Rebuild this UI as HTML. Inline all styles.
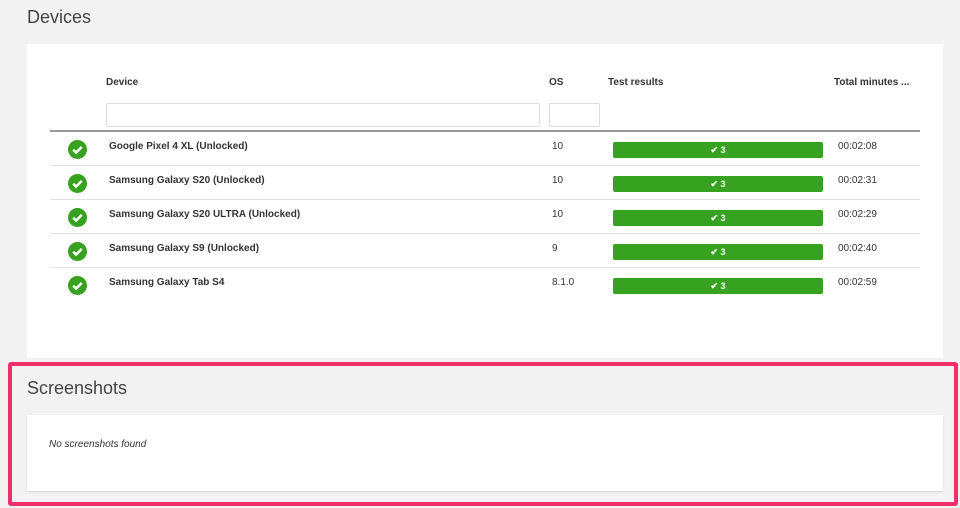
<!DOCTYPE html>
<html><head><style>
*{margin:0;padding:0;box-sizing:border-box}
body{width:960px;height:508px;background:#f2f2f2;font-family:"Liberation Sans",Arial,sans-serif;position:relative;overflow:hidden;color:#333}
.a{position:absolute}
h2{position:absolute;font-weight:normal;font-size:18px;color:#444}
.th{position:absolute;top:77px;font-size:10px;font-weight:bold;color:#333}
.inp{position:absolute;top:103px;height:24px;border:1px solid #ddd;background:#fff;border-radius:2px}
.row{position:absolute;left:50px;width:870px;height:34px;border-bottom:1px solid #e2e2e2}
.nm{position:absolute;left:59px;top:9px;font-size:10px;font-weight:bold;color:#333}
.os{position:absolute;left:502px;top:9px;font-size:10px;color:#333}
.bar{position:absolute;left:563px;top:10px;width:210px;height:16px;background:#37a21f;border-radius:2px;color:#fff;font-size:9px;font-weight:bold;text-align:center;line-height:16px}
.tm{position:absolute;left:788px;top:9px;font-size:10px;color:#333}
.ck{position:absolute;left:18px;top:8px}
</style></head><body>
<h2 style="left:27px;top:7px">Devices</h2>
<div class="a" style="left:27px;top:44px;width:916px;height:314px;background:#fff"></div>
<div class="th" style="left:106px">Device</div>
<div class="th" style="left:549px">OS</div>
<div class="th" style="left:608px">Test results</div>
<div class="th" style="left:834px">Total minutes ...</div>
<div class="inp" style="left:106px;width:434px"></div>
<div class="inp" style="left:549px;width:51px"></div>
<div class="a" style="left:50px;top:130px;width:870px;height:2px;background:#999"></div>

<div class="row" style="top:132px"><svg class="ck" width="19" height="19" viewBox="0 0 20 20"><circle cx="10" cy="10" r="10" fill="#37a21f"/><path d="M5.5 10.3l3 3 6-6" stroke="#fff" stroke-width="2.6" fill="none"/></svg><div class="nm">Google Pixel 4 XL (Unlocked)</div><div class="os">10</div><div class="bar">✔ 3</div><div class="tm">00:02:08</div></div>
<div class="row" style="top:166px"><svg class="ck" width="19" height="19" viewBox="0 0 20 20"><circle cx="10" cy="10" r="10" fill="#37a21f"/><path d="M5.5 10.3l3 3 6-6" stroke="#fff" stroke-width="2.6" fill="none"/></svg><div class="nm">Samsung Galaxy S20 (Unlocked)</div><div class="os">10</div><div class="bar">✔ 3</div><div class="tm">00:02:31</div></div>
<div class="row" style="top:200px"><svg class="ck" width="19" height="19" viewBox="0 0 20 20"><circle cx="10" cy="10" r="10" fill="#37a21f"/><path d="M5.5 10.3l3 3 6-6" stroke="#fff" stroke-width="2.6" fill="none"/></svg><div class="nm">Samsung Galaxy S20 ULTRA (Unlocked)</div><div class="os">10</div><div class="bar">✔ 3</div><div class="tm">00:02:29</div></div>
<div class="row" style="top:234px"><svg class="ck" width="19" height="19" viewBox="0 0 20 20"><circle cx="10" cy="10" r="10" fill="#37a21f"/><path d="M5.5 10.3l3 3 6-6" stroke="#fff" stroke-width="2.6" fill="none"/></svg><div class="nm">Samsung Galaxy S9 (Unlocked)</div><div class="os">9</div><div class="bar">✔ 3</div><div class="tm">00:02:40</div></div>
<div class="row" style="top:268px;border-bottom:none"><svg class="ck" width="19" height="19" viewBox="0 0 20 20"><circle cx="10" cy="10" r="10" fill="#37a21f"/><path d="M5.5 10.3l3 3 6-6" stroke="#fff" stroke-width="2.6" fill="none"/></svg><div class="nm">Samsung Galaxy Tab S4</div><div class="os">8.1.0</div><div class="bar">✔ 3</div><div class="tm">00:02:59</div></div>

<div class="a" style="left:8px;top:362px;width:950px;height:144px;border:4px solid #f0306a;border-radius:3px"></div>
<h2 style="left:27px;top:378px">Screenshots</h2>
<div class="a" style="left:27px;top:415px;width:916px;height:76px;background:#fff;box-shadow:0 1px 2px rgba(0,0,0,.12)"></div>
<div class="a" style="left:49px;top:439px;font-size:10px;font-style:italic;color:#333">No screenshots found</div>
</body></html>
